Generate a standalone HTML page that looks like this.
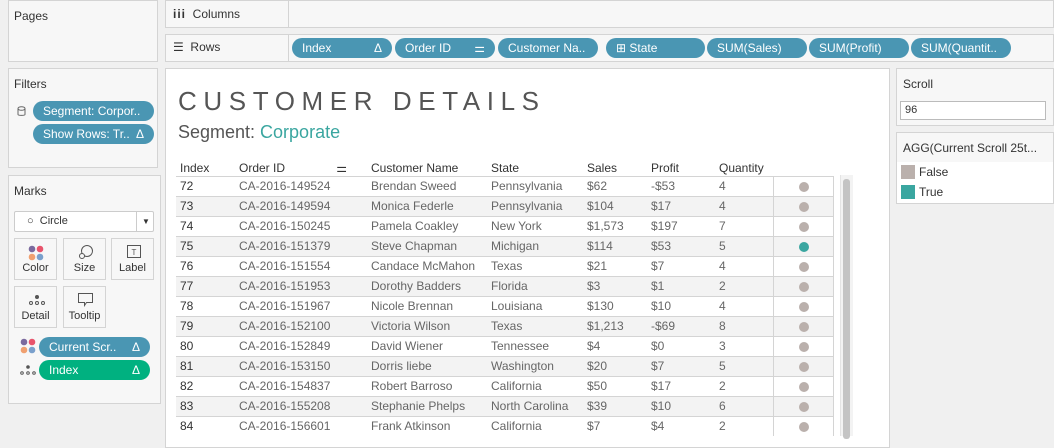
<!DOCTYPE html>
<html><head><meta charset="utf-8"><style>
*{margin:0;padding:0;box-sizing:border-box}
body{width:1054px;height:436px;overflow:hidden;background:#f0f0f0;font-family:"Liberation Sans",sans-serif;position:relative;color:#333}
.p{position:absolute;background:#f7f7f7;border:1px solid #d4d4d4}
.t{position:absolute;font-size:12px;color:#333}
.pill{position:absolute;height:20px;border-radius:10px;background:#4a96b3;color:#fff;font-size:12px;line-height:20px;padding-left:10px;white-space:nowrap;overflow:hidden}
.pill b{position:absolute;right:10px;top:0;font-weight:normal}
.card{position:absolute;width:43px;height:42px;border:1px solid #d4d4d4;background:#f7f7f7;font-size:11px;text-align:center;color:#333}
.card span{position:absolute;left:0;right:0;bottom:5px}
table{border-collapse:collapse;position:absolute;left:176px;top:156px;font-size:12px}
td{height:20px;padding:0 0 0 4px;color:#666;border-top:1px solid #d4d4d4;white-space:nowrap}
th{height:20px;text-align:left;font-weight:normal;color:#333;padding-left:4px;vertical-align:bottom;padding-bottom:1px}
tr.g td{background:#f3f3f3}
td.i{color:#333}
td.d{border-left:1px solid #d4d4d4;border-right:1px solid #d4d4d4;position:relative}
.dot{position:absolute;left:25px;top:5px;width:10px;height:10px;border-radius:50%;background:#bab0ac}
</style></head><body>
<div class="p" style="left:8px;top:0;width:150px;height:62px"></div>
<div class="t" style="left:14px;top:9px">Pages</div>
<div class="p" style="left:165px;top:0;width:889px;height:28px"></div>
<div style="position:absolute;left:288px;top:1px;width:1px;height:26px;background:#d4d4d4"></div>
<div class="t" style="left:173px;top:7px"><b style="font-size:12px;letter-spacing:1px">iii</b> &nbsp;Columns</div>
<div class="p" style="left:165px;top:34px;width:889px;height:28px"></div>
<div style="position:absolute;left:288px;top:35px;width:1px;height:26px;background:#d4d4d4"></div>
<div class="t" style="left:173px;top:40px">☰ &nbsp;Rows</div>
<div class="pill" style="left:292px;top:38px;width:100px">Index<b>Δ</b></div>
<div class="pill" style="left:395px;top:38px;width:100px">Order ID<b>⚌</b></div>
<div class="pill" style="left:498px;top:38px;width:100px">Customer Na..</div>
<div class="pill" style="left:606px;top:38px;width:99px">⊞ State</div>
<div class="pill" style="left:707px;top:38px;width:100px">SUM(Sales)</div>
<div class="pill" style="left:809px;top:38px;width:100px">SUM(Profit)</div>
<div class="pill" style="left:911px;top:38px;width:100px">SUM(Quantit..</div>

<div class="p" style="left:8px;top:68px;width:150px;height:100px"></div>
<div class="t" style="left:14px;top:77px">Filters</div>
<svg style="position:absolute;left:17px;top:106px" width="9" height="11" fill="none" stroke="#666"><ellipse cx="4.5" cy="2.5" rx="3.5" ry="1.8"/><path d="M1 2.5v6c0 1.2 7 1.2 7 0v-6"/></svg>
<div class="pill" style="left:33px;top:101px;width:121px">Segment: Corpor..</div>
<div class="pill" style="left:33px;top:124px;width:121px">Show Rows: Tr..<b>Δ</b></div>

<div class="p" style="left:8px;top:175px;width:153px;height:229px"></div>
<div class="t" style="left:14px;top:184px">Marks</div>
<div style="position:absolute;left:14px;top:211px;width:140px;height:21px;border:1px solid #ccc;background:#fff;border-radius:2px;font-size:11px;line-height:19px;padding-left:12px">○ &nbsp;Circle<span style="position:absolute;left:121px;top:0;height:19px;border-left:1px solid #ccc;padding-left:5px;font-size:8px">▼</span></div>
<div class="card" style="left:14px;top:238px"><svg style="position:absolute;left:13px;top:6px" width="16" height="16"><circle cx="4" cy="4" r="3.3" fill="#7b6a9e"/><circle cx="12" cy="4" r="3.3" fill="#e8546c"/><circle cx="4" cy="12" r="3.3" fill="#f0a070"/><circle cx="12" cy="12" r="3.3" fill="#7aa0cc"/></svg><span>Color</span></div>
<div class="card" style="left:63px;top:238px"><svg style="position:absolute;left:14px;top:5px" width="16" height="16" fill="none" stroke="#555"><circle cx="9" cy="7" r="5.5"/><circle cx="4" cy="12" r="2.5" fill="#f7f7f7"/></svg><span>Size</span></div>
<div class="card" style="left:111px;top:238px"><svg style="position:absolute;left:14px;top:5px" width="16" height="16" fill="none" stroke="#555"><rect x="1.5" y="1.5" width="13" height="12"/><text x="8" y="11" font-size="8" text-anchor="middle" fill="#555" stroke="none">T</text></svg><span>Label</span></div>
<div class="card" style="left:14px;top:286px"><svg style="position:absolute;left:13px;top:7px" width="18" height="12" fill="none" stroke="#555"><circle cx="9" cy="3" r="1.5" fill="#555"/><circle cx="3" cy="9" r="1.5"/><circle cx="9" cy="9" r="1.5"/><circle cx="15" cy="9" r="1.5"/></svg><span>Detail</span></div>
<div class="card" style="left:63px;top:286px"><svg style="position:absolute;left:13px;top:5px" width="18" height="16" fill="none" stroke="#555"><path d="M1.5 1.5h14v9h-6l-2 3v-3h-6z"/></svg><span>Tooltip</span></div>
<svg style="position:absolute;left:20px;top:338px" width="16" height="16"><circle cx="4" cy="4" r="3.3" fill="#7b6a9e"/><circle cx="12" cy="4" r="3.3" fill="#e8546c"/><circle cx="4" cy="12" r="3.3" fill="#f0a070"/><circle cx="12" cy="12" r="3.3" fill="#7aa0cc"/></svg>
<div class="pill" style="left:39px;top:337px;width:111px">Current Scr..<b>Δ</b></div>
<svg style="position:absolute;left:19px;top:364px" width="18" height="12" fill="none" stroke="#555"><circle cx="9" cy="3" r="1.3" fill="#555"/><circle cx="3" cy="9" r="1.3"/><circle cx="9" cy="9" r="1.3"/><circle cx="15" cy="9" r="1.3"/></svg>
<div class="pill" style="left:39px;top:360px;width:111px;background:#00b180">Index<b>Δ</b></div>

<div class="p" style="left:165px;top:68px;width:725px;height:380px;background:#fff"></div>
<div style="position:absolute;left:178px;top:86px;font-size:26px;letter-spacing:6.6px;color:#555">CUSTOMER DETAILS</div>
<div style="position:absolute;left:178px;top:122px;font-size:18px;color:#555">Segment: <span style="color:#3aa6a0">Corporate</span></div>
<table>
<colgroup><col style="width:59px"><col style="width:132px"><col style="width:120px"><col style="width:96px"><col style="width:64px"><col style="width:68px"><col style="width:58px"><col style="width:60px"></colgroup>
<tr><th>Index</th><th>Order ID<span style="float:right;margin-right:20px">⚌</span></th><th>Customer Name</th><th>State</th><th>Sales</th><th>Profit</th><th>Quantity</th><th></th></tr>
<tr><td class="i">72</td><td>CA-2016-149524</td><td>Brendan Sweed</td><td>Pennsylvania</td><td>$62</td><td>-$53</td><td>4</td><td class="d"><i class="dot"></i></td></tr>
<tr class="g"><td class="i">73</td><td>CA-2016-149594</td><td>Monica Federle</td><td>Pennsylvania</td><td>$104</td><td>$17</td><td>4</td><td class="d"><i class="dot"></i></td></tr>
<tr><td class="i">74</td><td>CA-2016-150245</td><td>Pamela Coakley</td><td>New York</td><td>$1,573</td><td>$197</td><td>7</td><td class="d"><i class="dot"></i></td></tr>
<tr class="g"><td class="i">75</td><td>CA-2016-151379</td><td>Steve Chapman</td><td>Michigan</td><td>$114</td><td>$53</td><td>5</td><td class="d"><i class="dot" style="background:#3aa6a0"></i></td></tr>
<tr><td class="i">76</td><td>CA-2016-151554</td><td>Candace McMahon</td><td>Texas</td><td>$21</td><td>$7</td><td>4</td><td class="d"><i class="dot"></i></td></tr>
<tr class="g"><td class="i">77</td><td>CA-2016-151953</td><td>Dorothy Badders</td><td>Florida</td><td>$3</td><td>$1</td><td>2</td><td class="d"><i class="dot"></i></td></tr>
<tr><td class="i">78</td><td>CA-2016-151967</td><td>Nicole Brennan</td><td>Louisiana</td><td>$130</td><td>$10</td><td>4</td><td class="d"><i class="dot"></i></td></tr>
<tr class="g"><td class="i">79</td><td>CA-2016-152100</td><td>Victoria Wilson</td><td>Texas</td><td>$1,213</td><td>-$69</td><td>8</td><td class="d"><i class="dot"></i></td></tr>
<tr><td class="i">80</td><td>CA-2016-152849</td><td>David Wiener</td><td>Tennessee</td><td>$4</td><td>$0</td><td>3</td><td class="d"><i class="dot"></i></td></tr>
<tr class="g"><td class="i">81</td><td>CA-2016-153150</td><td>Dorris liebe</td><td>Washington</td><td>$20</td><td>$7</td><td>5</td><td class="d"><i class="dot"></i></td></tr>
<tr><td class="i">82</td><td>CA-2016-154837</td><td>Robert Barroso</td><td>California</td><td>$50</td><td>$17</td><td>2</td><td class="d"><i class="dot"></i></td></tr>
<tr class="g"><td class="i">83</td><td>CA-2016-155208</td><td>Stephanie Phelps</td><td>North Carolina</td><td>$39</td><td>$10</td><td>6</td><td class="d"><i class="dot"></i></td></tr>
<tr><td class="i">84</td><td>CA-2016-156601</td><td>Frank Atkinson</td><td>California</td><td>$7</td><td>$4</td><td>2</td><td class="d"><i class="dot"></i></td></tr>
</table>
<div style="position:absolute;left:840px;top:175px;width:13px;height:261px;background:#f3f3f3;border-left:1px solid #e4e4e4"></div>
<div style="position:absolute;left:843px;top:179px;width:7px;height:260px;background:#c4c4c4;border-radius:3px"></div>

<div class="p" style="left:896px;top:68px;width:158px;height:58px"></div>
<div class="t" style="left:903px;top:77px">Scroll</div>
<div style="position:absolute;left:900px;top:101px;width:146px;height:19px;border:1px solid #bbb;background:#fff;font-size:11px;line-height:17px;padding-left:4px">96</div>
<div class="p" style="left:896px;top:132px;width:158px;height:72px;background:#fff"></div>
<div style="position:absolute;left:897px;top:133px;width:156px;height:29px;background:#f7f7f7"></div>
<div class="t" style="left:903px;top:141px">AGG(Current Scroll 25t...</div>
<div style="position:absolute;left:901px;top:165px;width:14px;height:14px;background:#bab0ac"></div>
<div class="t" style="left:919px;top:165px">False</div>
<div style="position:absolute;left:901px;top:185px;width:14px;height:14px;background:#3aa6a0"></div>
<div class="t" style="left:919px;top:185px">True</div>
</body></html>
